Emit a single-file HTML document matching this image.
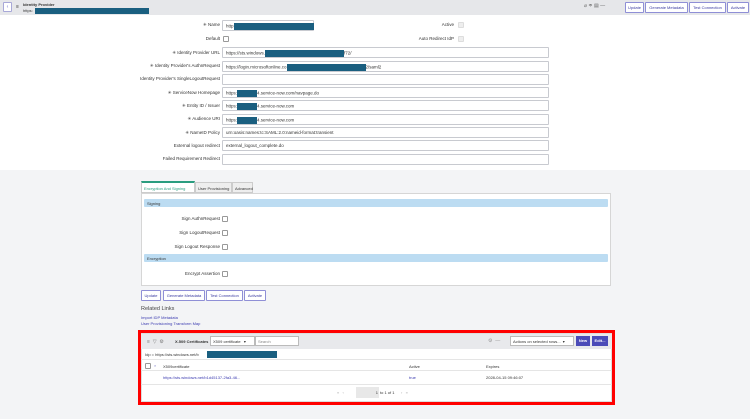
<!DOCTYPE html>
<html><head><style>
*{box-sizing:border-box;margin:0;padding:0}
body{width:750px;height:419px;background:#f3f4f6;font-family:"Liberation Sans",sans-serif;font-size:4.5px;color:#333;position:relative;overflow:hidden}
.a{position:absolute}
.hdr{left:0;top:0;width:750px;height:15px;background:#e6e7ea}
.form{left:0;top:15px;width:750px;height:155px;background:#fff}
.lbl{text-align:right;width:220px;left:0;white-space:nowrap}
.inp{left:222px;width:327px;height:11px;border:1px solid #c8cad0;background:#fff;border-radius:1px;padding:2px 3px;white-space:nowrap}
.red{background:#1a5f80;height:7px;display:inline-block;vertical-align:middle}
.cb{width:6px;height:6px;border:1px solid #999;border-radius:1px;background:#fff}
.btn{height:11px;border:1px solid #8f8fd6;background:#fff;color:#3a3aa0;font-size:4px;text-align:center;line-height:9px;border-radius:1px}
.bar{background:#bcdcf2;height:8px;left:144px;width:464px;border-radius:1px;padding:2px 3px;font-size:4px}
a{color:#3b3bb0}
</style></head><body>
<div class="a hdr"></div>
<div class="a" style="left:3px;top:2px;width:9px;height:10px;border:1px solid #a8a8d8;background:#fff;border-radius:1px;color:#66c;font-size:5px;text-align:center;line-height:8px">‹</div>
<div class="a" style="left:16px;top:4px;font-size:5px">≡</div>
<div class="a" style="left:23px;top:2px;font-size:4px;font-weight:bold">Identity Provider</div>
<div class="a" style="left:23px;top:8px;font-size:4px">https:</div>
<div class="a red" style="left:35px;top:8px;width:114px;height:6px"></div>
<div class="a" style="left:584px;top:3px;font-size:5px;color:#666">⌀ ≑ ▤ —</div>
<div class="a btn" style="left:625px;top:2px;width:19px">Update</div>
<div class="a btn" style="left:645px;top:2px;width:43px">Generate Metadata</div>
<div class="a btn" style="left:689px;top:2px;width:37px">Test Connection</div>
<div class="a btn" style="left:727px;top:2px;width:22px">Activate</div>

<div class="a form"></div>
<div class="a lbl" style="top:22px">✳ Name</div>
<div class="a inp" style="top:20px;width:92px">http<span class="red" style="width:80px"></span></div>
<div class="a lbl" style="top:36px">Default</div>
<div class="a cb" style="left:223px;top:36px"></div>
<div class="a" style="left:400px;top:22px;width:54px;text-align:right">Active</div>
<div class="a cb" style="left:458px;top:22px;border-color:#ddd;background:#eee"></div>
<div class="a" style="left:380px;top:36px;width:74px;text-align:right">Auto Redirect IdP</div>
<div class="a cb" style="left:458px;top:36px;border-color:#ddd;background:#eee"></div>

<div class="a lbl" style="top:50px">✳ Identity Provider URL</div>
<div class="a inp" style="top:47px">https://sts.windows.<span class="red" style="width:79px"></span>f72/</div>
<div class="a lbl" style="top:63px">✳ Identity Provider's AuthnRequest</div>
<div class="a inp" style="top:61px">https://login.microsoftonline.co<span class="red" style="width:79px"></span>2/saml2</div>
<div class="a lbl" style="top:76px">Identity Provider's SingleLogoutRequest</div>
<div class="a inp" style="top:74px"></div>
<div class="a lbl" style="top:90px">✳ ServiceNow Homepage</div>
<div class="a inp" style="top:87px">https:<span class="red" style="width:20px"></span>4.service-now.com/navpage.do</div>
<div class="a lbl" style="top:103px">✳ Entity ID / Issuer</div>
<div class="a inp" style="top:100px">https:<span class="red" style="width:20px"></span>4.service-now.com</div>
<div class="a lbl" style="top:116px">✳ Audience URI</div>
<div class="a inp" style="top:114px">https:<span class="red" style="width:20px"></span>4.service-now.com</div>
<div class="a lbl" style="top:130px">✳ NameID Policy</div>
<div class="a inp" style="top:127px">urn:oasis:names:tc:SAML:2.0:nameid-format:transient</div>
<div class="a lbl" style="top:143px">External logout redirect</div>
<div class="a inp" style="top:140px">external_logout_complete.do</div>
<div class="a lbl" style="top:156px">Failed Requirement Redirect</div>
<div class="a inp" style="top:154px"></div>

<div class="a" style="left:141px;top:181px;width:54px;height:12px;background:#fff;border:1px solid #ccc;border-top:2px solid #2a9d7f;color:#2a9d7f;font-size:4px;padding:3px 2px;white-space:nowrap">Encryption And Signing</div>
<div class="a" style="left:195px;top:182px;width:37px;height:11px;background:#eee;border:1px solid #ccc;font-size:4px;padding:3px 2px;white-space:nowrap">User Provisioning</div>
<div class="a" style="left:232px;top:182px;width:21px;height:11px;background:#eee;border:1px solid #ccc;font-size:4px;padding:3px 2px">Advanced</div>
<div class="a" style="left:141px;top:193px;width:470px;height:93px;background:#fff;border:1px solid #d6d6d6"></div>
<div class="a bar" style="top:199px">Signing</div>
<div class="a" style="left:140px;top:216px;width:80px;text-align:right">Sign AuthnRequest</div><div class="a cb" style="left:222px;top:216px"></div>
<div class="a" style="left:140px;top:230px;width:80px;text-align:right">Sign LogoutRequest</div><div class="a cb" style="left:222px;top:230px"></div>
<div class="a" style="left:140px;top:244px;width:80px;text-align:right">Sign Logout Response</div><div class="a cb" style="left:222px;top:244px"></div>
<div class="a bar" style="top:254px">Encryption</div>
<div class="a" style="left:140px;top:271px;width:80px;text-align:right">Encrypt Assertion</div><div class="a cb" style="left:222px;top:271px"></div>

<div class="a btn" style="left:141px;top:290px;width:20px">Update</div>
<div class="a btn" style="left:163px;top:290px;width:42px">Generate Metadata</div>
<div class="a btn" style="left:206px;top:290px;width:37px">Test Connection</div>
<div class="a btn" style="left:244px;top:290px;width:22px">Activate</div>
<div class="a" style="left:141px;top:306px;font-size:5.5px;color:#444">Related Links</div>
<div class="a" style="left:141px;top:315px;font-size:4px"><a>Import IDP Metadata</a></div>
<div class="a" style="left:141px;top:321px;font-size:4px"><a>User Provisioning Transform Map</a></div>

<div class="a" style="left:138px;top:330px;width:477px;height:75px;border:3px solid #f00;background:#f3f4f6"></div>
<div class="a" style="left:141px;top:333px;width:471px;height:69px;background:#fff;border:1px solid #ddd"></div>
<div class="a" style="left:141px;top:334px;width:471px;height:15px;background:#e8e9ec"></div>
<div class="a" style="left:147px;top:339px;color:#777;font-size:5px">≡ &nbsp;▽ &nbsp;⚙</div>
<div class="a" style="left:175px;top:339px;font-size:4px;font-weight:bold">X.509 Certificates</div>
<div class="a" style="left:210px;top:336px;width:45px;height:10px;background:#fff;border:1px solid #bbb;font-size:4px;padding:2px">X509 certificate &nbsp;&nbsp;▾</div>
<div class="a" style="left:255px;top:336px;width:44px;height:10px;background:#fff;border:1px solid #bbb;font-size:4px;padding:2px;color:#888">Search</div>
<div class="a" style="left:488px;top:338px;color:#999;font-size:5px">⚙ &nbsp;—</div>
<div class="a" style="left:510px;top:336px;width:64px;height:10px;background:#fff;border:1px solid #bbb;font-size:4px;padding:2px">Actions on selected rows... &nbsp;▾</div>
<div class="a" style="left:576px;top:336px;width:14px;height:10px;background:#4b4bb8;color:#fff;font-size:4px;text-align:center;line-height:10px;font-weight:bold">New</div>
<div class="a" style="left:592px;top:336px;width:16px;height:10px;background:#4b4bb8;color:#fff;font-size:4px;text-align:center;line-height:10px;font-weight:bold">Edit...</div>
<div class="a" style="left:145px;top:352px;font-size:4px">Idp = https://sts.windows.net/b</div>
<div class="a red" style="left:207px;top:351px;width:70px"></div>
<div class="a" style="left:141px;top:359px;width:471px;height:1px;background:#e5e5e5"></div>
<div class="a cb" style="left:145px;top:363px"></div>
<div class="a" style="left:154px;top:363px;color:#88c;font-size:4px">⌕</div>
<div class="a" style="left:163px;top:364px;font-size:4px">X509certificate</div>
<div class="a" style="left:409px;top:364px;font-size:4px">Active</div>
<div class="a" style="left:486px;top:364px;font-size:4px">Expires</div>
<div class="a" style="left:141px;top:370px;width:471px;height:1px;background:#e5e5e5"></div>
<div class="a" style="left:163px;top:375px;font-size:4px"><a>https://sts.windows.net/b1d45137-2fa3-46...</a></div>
<div class="a" style="left:409px;top:375px;font-size:4px"><a>true</a></div>
<div class="a" style="left:486px;top:375px;font-size:4px">2028-04-15 09:46:07</div>
<div class="a" style="left:141px;top:384px;width:471px;height:1px;background:#e5e5e5"></div>
<div class="a" style="left:337px;top:390px;font-size:4px;color:#aaa">«&nbsp;&nbsp;&nbsp;‹</div>
<div class="a" style="left:356px;top:387px;width:23px;height:11px;background:#e8e8e8;font-size:4px;text-align:right;padding:3px 1px">1</div>
<div class="a" style="left:380px;top:390px;font-size:4px">to 1 of 1</div>
<div class="a" style="left:401px;top:390px;font-size:4px;color:#aaa">›&nbsp;&nbsp;&nbsp;»</div>
</body></html>
